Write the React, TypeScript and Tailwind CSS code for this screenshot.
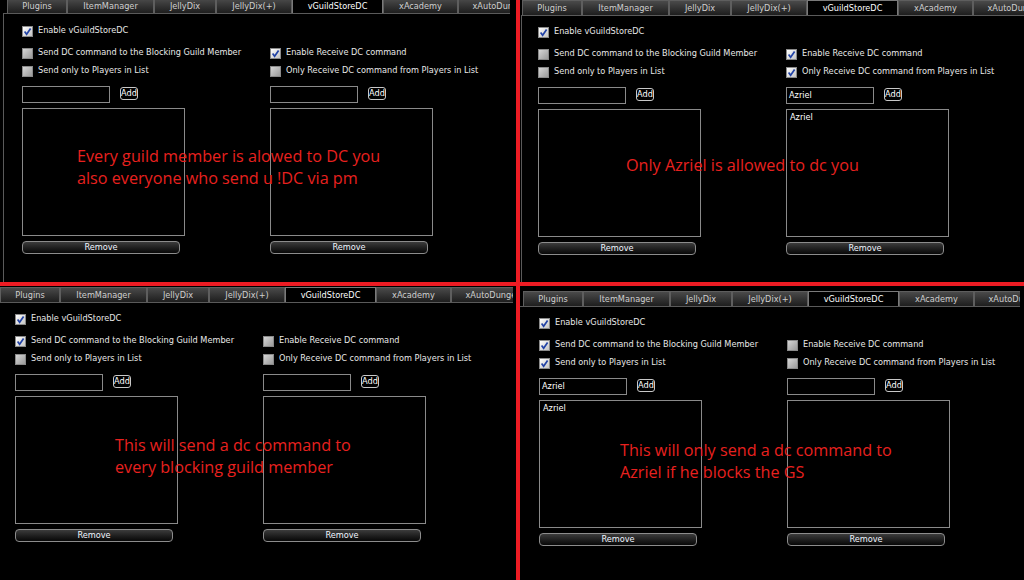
import React from "react";

const TABS = ["Plugins", "ItemManager", "JellyDix", "JellyDix(+)", "vGuildStoreDC", "xAcademy", "xAutoDungeon"];
const TAB_W = ["w-[60px]", "w-[87px]", "w-[62px]", "w-[76px]", "w-[91px]", "w-[75px]", "w-[90px]"];

interface QuadProps {
  outer: string;
  strip: string;
  frame: string;
  content: string;
  sendDc: boolean;
  sendList: boolean;
  recv: boolean;
  recvList: boolean;
  leftName?: string;
  rightName?: string;
  note: string[];
  notePos: string;
}

function Check({ on }: { on: boolean }) {
  return (
    <span
      className={
        on
          ? "flex h-[11px] w-[11px] shrink-0 items-center justify-center border border-[#8a8a8a] bg-gradient-to-br from-[#ffffff] to-[#c4c4c4]"
          : "flex h-[11px] w-[11px] shrink-0 items-center justify-center border border-[#8a8a8a] bg-gradient-to-br from-[#d6d6d6] to-[#9a9a9a]"
      }
    >
      {on && (
        <svg viewBox="0 0 9 9" className="h-[9px] w-[9px]">
          <path d="M1.6 4.6 L3.6 7.2 L7.6 1.4" stroke="#2243a6" strokeWidth="1.7" fill="none" />
        </svg>
      )}
    </span>
  );
}

function Row({ on, label }: { on: boolean; label: string }) {
  return (
    <div className="flex h-[18px] items-center gap-[5px]">
      <Check on={on} />
      <span className="whitespace-nowrap text-[#e8e8e8]">{label}</span>
    </div>
  );
}

function Column({ a, b, name }: { a: [boolean, string]; b: [boolean, string]; name?: string }) {
  return (
    <div className="flex w-[248px] shrink-0 flex-col">
      <Row on={a[0]} label={a[1]} />
      <Row on={b[0]} label={b[1]} />

      <div className="mt-[6px] flex items-start">
        <div className="h-[17px] w-[88px] border border-[#8a8a8a] bg-black pl-[2px] leading-[15px] text-white">
          {name}
        </div>
        <div className="ml-[10px] mt-px flex h-[13px] w-[18px] items-center justify-center rounded-[3px] border border-[#c8c8c8] bg-black leading-none text-white">
          Add
        </div>
      </div>

      <div className="mt-[5px] h-[128px] w-[163px] border border-[#8a8a8a] bg-black px-[3px] pt-[1px] text-white">
        {name}
      </div>

      <div className="mt-[5px] flex h-[13px] w-[158px] items-center justify-center rounded-[4px] border border-[#8c8c8c] bg-gradient-to-b from-[#3c3c3c] to-[#080808] leading-none text-[#f0f4ff]">
        Remove
      </div>
    </div>
  );
}

function Quadrant(p: QuadProps) {
  return (
    <div className="relative h-full overflow-hidden bg-black">
      <div className={`flex h-full flex-col ${p.outer}`}>
        {/* tab strip */}
        <div className={`flex h-[15px] shrink-0 items-start overflow-hidden ${p.strip}`}>
          {TABS.map((t, i) =>
            t === "vGuildStoreDC" ? (
              <div
                key={t}
                className={`relative z-10 flex h-[16px] shrink-0 justify-center border-x border-t border-[#7a7a7a] bg-black leading-[14px] text-white ${TAB_W[i]}`}
              >
                {t}
              </div>
            ) : (
              <div
                key={t}
                className={`flex h-[15px] shrink-0 justify-center whitespace-nowrap border-x border-t border-[#5e5e5e] bg-gradient-to-b from-[#4a4a4a] to-[#1e1e1e] leading-[14px] text-[#cfcfcf] ${TAB_W[i]}`}
              >
                {t}
              </div>
            )
          )}
        </div>

        {/* panel */}
        <div className={`flex-1 border-t border-[#5a5a5a] ${p.frame}`}>
          <div className={p.content}>
            <Row on={true} label="Enable vGuildStoreDC" />
            <div className="mt-[4px] flex">
              <Column
                a={[p.sendDc, "Send DC command to the Blocking Guild Member"]}
                b={[p.sendList, "Send only to Players in List"]}
                name={p.leftName}
              />
              <Column
                a={[p.recv, "Enable Receive DC command"]}
                b={[p.recvList, "Only Receive DC command from Players in List"]}
                name={p.rightName}
              />
            </div>
          </div>
        </div>
      </div>

      {/* annotation */}
      <div className={`absolute font-['Open_Sans',sans-serif] text-[16.2px] leading-[22px] text-[#e8211f] ${p.notePos}`}>
        {p.note.map((l) => (
          <div key={l} className="whitespace-nowrap">{l}</div>
        ))}
      </div>
    </div>
  );
}

export default function App() {
  return (
    <div className="grid h-[580px] w-[1024px] grid-cols-[516px_4px_504px] grid-rows-[282px_4px_294px] overflow-hidden bg-black font-['DejaVu_Sans_Condensed','DejaVu_Sans',sans-serif] text-[9.1px]">
      <div className="col-start-1 row-start-1">
        <Quadrant
          outer="ml-[3px] w-[507px]"
          strip="-mt-[2px] pl-[4px]"
          frame="border-l"
          content="pl-[18px] pt-[8px]"
          sendDc={false}
          sendList={false}
          recv={true}
          recvList={false}
          note={["Every guild member is alowed to DC you", "also everyone who send u !DC via pm"]}
          notePos="left-[77px] top-[145px]"
        />
      </div>

      <div className="col-start-2 row-span-3 row-start-1 bg-[#ed1c24]" />

      <div className="col-start-3 row-start-1">
        <Quadrant
          outer="ml-[1px] w-[503px]"
          strip="pl-[1px]"
          frame="border-l"
          content="pl-[16px] pt-[7px]"
          sendDc={false}
          sendList={false}
          recv={true}
          recvList={true}
          rightName="Azriel"
          note={["Only Azriel is allowed to dc you"]}
          notePos="left-[106px] top-[154px]"
        />
      </div>

      <div className="col-span-3 col-start-1 row-start-2 bg-[#ed1c24]" />

      <div className="col-start-1 row-start-3">
        <Quadrant
          outer="w-[513px]"
          strip="mt-[1px]"
          frame=""
          content="pl-[15px] pt-[7px]"
          sendDc={true}
          sendList={false}
          recv={false}
          recvList={false}
          note={["This will send a dc command to", "every blocking guild member"]}
          notePos="left-[115px] top-[148px]"
        />
      </div>

      <div className="col-start-3 row-start-3">
        <Quadrant
          outer="w-[500px]"
          strip="mt-[5px] pl-[3px]"
          frame=""
          content="pl-[19px] pt-[7px]"
          sendDc={true}
          sendList={true}
          recv={false}
          recvList={false}
          leftName="Azriel"
          note={["This will only send a dc command to", "Azriel if he blocks the GS"]}
          notePos="left-[100px] top-[153px]"
        />
      </div>
    </div>
  );
}
